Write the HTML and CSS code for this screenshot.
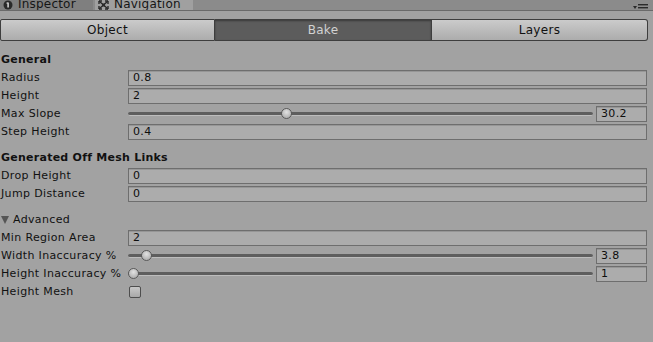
FILE: index.html
```html
<!DOCTYPE html>
<html>
<head>
<meta charset="utf-8">
<link rel="stylesheet" href="styles.css">
</head>
<body>
<div class="window">
  <div class="tabbar">
    <div class="tab tab-inactive">
      <svg class="tab-icon" width="10" height="10" viewBox="0 0 10 10"><circle cx="5" cy="5" r="4.5" fill="#2a2a2a"/><rect x="4.3" y="2.5" width="1.6" height="5" fill="#cfcfcf"/><rect x="3.5" y="2.5" width="1.5" height="1.2" fill="#cfcfcf"/></svg>
      <span>Inspector</span>
    </div>
    <div class="tab tab-active">
      <svg class="tab-icon" width="11" height="10" viewBox="0 0 11 10"><g fill="none" stroke="#2a2a2a" stroke-width="1.4"><path d="M1 1 L10 9 M10 1 L1 9"/><path d="M1 1 h3 M1 1 v3 M10 1 h-3 M10 1 v3 M1 9 h3 M1 9 v-3 M10 9 h-3 M10 9 v-3"/></g><rect x="4" y="3.5" width="3" height="3" fill="#2a2a2a"/></svg>
      <span>Navigation</span>
    </div>
    <div class="tab-spacer"></div>
    <div class="tab-menu">
      <svg width="16" height="8" viewBox="0 0 16 8"><path d="M0 2 L4 2 L2 5 Z" fill="#2a2a2a"/><rect x="5" y="0" width="10" height="1.4" fill="#2a2a2a"/><rect x="5" y="3" width="10" height="1.4" fill="#2a2a2a"/><rect x="5" y="6" width="10" height="1.4" fill="#2a2a2a"/></svg>
    </div>
  </div>

  <div class="toolbar">
    <div class="tbtn tbtn-first">Object</div>
    <div class="tbtn tbtn-on">Bake</div>
    <div class="tbtn tbtn-last">Layers</div>
  </div>

  <div class="content">
    <div class="header">General</div>
    <div class="row"><div class="label">Radius</div><div class="field">0.8</div></div>
    <div class="row"><div class="label">Height</div><div class="field">2</div></div>
    <div class="row"><div class="label">Max Slope</div>
      <div class="slider"><div class="track"><div class="thumb" style="left: calc(33.6% - 3.7px)"></div></div><div class="field value">30.2</div></div>
    </div>
    <div class="row"><div class="label">Step Height</div><div class="field">0.4</div></div>

    <div class="header gap">Generated Off Mesh Links</div>
    <div class="row"><div class="label">Drop Height</div><div class="field">0</div></div>
    <div class="row"><div class="label">Jump Distance</div><div class="field">0</div></div>

    <div class="foldout gap"><span class="fold-arrow"></span>Advanced</div>
    <div class="row"><div class="label">Min Region Area</div><div class="field">2</div></div>
    <div class="row"><div class="label">Width Inaccuracy %</div>
      <div class="slider"><div class="track"><div class="thumb" style="left: calc(2.8% - 0.3px)"></div></div><div class="field value">3.8</div></div>
    </div>
    <div class="row"><div class="label">Height Inaccuracy %</div>
      <div class="slider"><div class="track"><div class="thumb" style="left: 0%"></div></div><div class="field value">1</div></div>
    </div>
    <div class="row"><div class="label">Height Mesh</div><div class="checkcell"><div class="checkbox"></div></div></div>
  </div>
</div>
</body>
</html>
```

FILE: styles.css
```css
* { box-sizing: border-box; }
html, body {
  margin: 0;
  padding: 0;
  width: 653px;
  height: 342px;
  overflow: hidden;
  background: #a2a2a2;
}
.window {
  font-family: "DejaVu Sans", Verdana, sans-serif;
  font-size: 11px;
  letter-spacing: 0.35px;
  color: #111;
  width: 653px;
  height: 342px;
  background: #a2a2a2;
}
.tabbar {
  display: flex;
  height: 11px;
  background: #8b8b8b;
  border-bottom: 1px solid #6a6a6a;
  overflow: hidden;
}
.tab {
  display: flex;
  align-items: flex-start;
  gap: 5px;
  height: 10px;
  padding-left: 3px;
  font-size: 12px;
  line-height: 12px;
  letter-spacing: 0.2px;
  color: #161616;
}
.tab span { margin-top: -2px; }
.tab-icon { margin-top: 0; flex: none; }
.tab-inactive {
  width: 93px;
  background: #7f7f7f;
  margin-right: 2px;
}
.tab-active {
  width: 98px;
  background: #a0a0a0;
  padding-left: 3px;
}
.tab-spacer { flex: 1; }
.tab-menu {
  width: 20px;
  padding-top: 2px;
}
.toolbar {
  display: flex;
  margin: 8px 5px 0 0;
  height: 22px;
}
.tbtn {
  flex: 1;
  text-align: center;
  font-size: 12px;
  line-height: 20px;
  letter-spacing: 0.3px;
  color: #111;
  background: linear-gradient(#cbcbcb, #acacac);
  border: 1px solid #3e3e3e;
  border-left: none;
}
.tbtn-first {
  border-left: 1px solid #3e3e3e;
  border-radius: 2px 0 0 2px;
  flex: 0 0 215px;
}
.tbtn-on {
  flex: 0 0 217px;
  background: #5c5c5c;
  color: #d2d2d2;
  box-shadow: inset 0 1px 2px #3a3a3a;
}
.tbtn-last {
  border-radius: 0 3px 3px 0;
}
.content {
  padding: 10px 6px 0 1px;
}
.header {
  font-weight: bold;
  height: 18px;
  line-height: 18px;
  letter-spacing: 0.25px;
}
.gap { margin-top: 8px; }
.foldout {
  height: 18px;
  line-height: 18px;
  display: flex;
  align-items: center;
}
.fold-arrow {
  width: 0;
  height: 0;
  border-left: 4px solid transparent;
  border-right: 4px solid transparent;
  border-top: 8px solid #555;
  margin: 0 4px 0 0;
}
.row {
  display: grid;
  grid-template-columns: 127px 1fr;
  height: 18px;
  align-items: center;
}
.label {
  white-space: nowrap;
  line-height: 18px;
}
.field {
  height: 16px;
  line-height: 14px;
  padding-left: 4px;
  background: #acacac;
  border: 1px solid #6e6e6e;
  box-shadow: inset 0 1px 0 #969696;
  color: #0e0e0e;
}
.slider {
  display: flex;
  align-items: center;
  gap: 3px;
  height: 18px;
}
.track {
  position: relative;
  flex: 1;
  height: 4px;
  border-radius: 2px;
  background: #5e5e5e;
  border-bottom: 1px solid #bdbdbd;
}
.thumb {
  position: absolute;
  top: -4px;
  width: 11px;
  height: 11px;
  border-radius: 50%;
  background: radial-gradient(circle at 50% 35%, #e2e2e2, #b4b4b4 70%);
  border: 1px solid #5a5a5a;
}
.value {
  flex: 0 0 51px;
}
.checkcell { display: flex; align-items: center; padding-left: 1px; }
.checkbox {
  width: 12px;
  height: 12px;
  border: 1px solid #4e4e4e;
  border-radius: 2px;
  background: linear-gradient(#c8c8c8, #a8a8a8);
}
```
